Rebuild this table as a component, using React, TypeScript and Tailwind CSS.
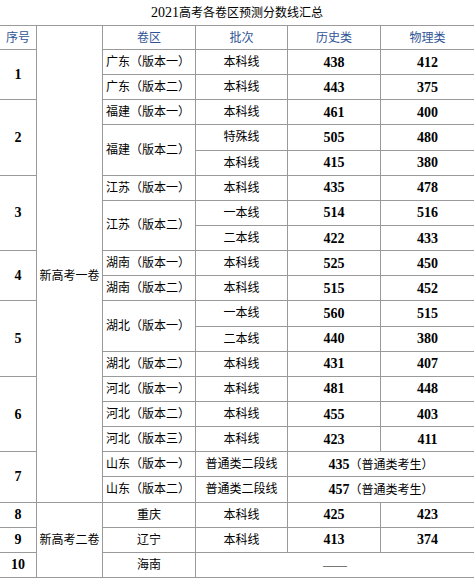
const cjk = "font-['Liberation_Serif','Noto_Sans_CJK_SC',serif]";

const line = "border-b border-r border-[#9a9a9a]";
const cell = `${line} p-0 text-center align-middle text-[12px] text-black`;
const num = "font-['Liberation_Serif',serif] font-bold text-[14px]";
const region = `${line} p-0 pl-[3px] text-left align-middle text-[12px] text-black whitespace-nowrap`;
const head = `${line} border-t p-0 text-center align-middle text-[12px] text-[#2f5496]`;

function Score({ a, b }: { a: string; b: string }) {
  return (
    <>
      <td className={`${cell} ${num}`}>{a}</td>
      <td className={`${cell} ${num} border-r-0`}>{b}</td>
    </>
  );
}

export default function App() {
  return (
    <div className={`h-[579px] w-[474px] overflow-hidden bg-white ${cjk}`}>
      <div className="flex h-[25px] items-center justify-center text-[12px] text-black">
        <span className="font-['Liberation_Serif',serif] text-[14px]">2021</span>
        <span>高考各卷区预测分数线汇总</span>
      </div>
      <table className="w-[474px] table-fixed border-separate border-spacing-0">
        <colgroup>
          <col className="w-[37px]" />
          <col className="w-[66px]" />
          <col className="w-[93px]" />
          <col className="w-[92px]" />
          <col className="w-[93px]" />
          <col className="w-[93px]" />
        </colgroup>
        <tbody>
          <tr className="h-[25px]">
            <td className={head}>序号</td>
            <td className={`${head} border-b-0`}></td>
            <td className={head}>卷区</td>
            <td className={head}>批次</td>
            <td className={head}>历史类</td>
            <td className={`${head} border-r-0`}>物理类</td>
          </tr>

          <tr className="h-[25.15px]">
            <td rowSpan={2} className={`${cell} ${num}`}>1</td>
            <td rowSpan={18} className={cell}>新高考一卷</td>
            <td className={region}>广东（版本一）</td>
            <td className={cell}>本科线</td>
            <Score a="438" b="412" />
          </tr>
          <tr className="h-[25.15px]">
            <td className={region}>广东（版本二）</td>
            <td className={cell}>本科线</td>
            <Score a="443" b="375" />
          </tr>

          <tr className="h-[25.15px]">
            <td rowSpan={3} className={`${cell} ${num}`}>2</td>
            <td className={region}>福建（版本一）</td>
            <td className={cell}>本科线</td>
            <Score a="461" b="400" />
          </tr>
          <tr className="h-[25.15px]">
            <td rowSpan={2} className={region}>福建（版本二）</td>
            <td className={cell}>特殊线</td>
            <Score a="505" b="480" />
          </tr>
          <tr className="h-[25.15px]">
            <td className={cell}>本科线</td>
            <Score a="415" b="380" />
          </tr>

          <tr className="h-[25.15px]">
            <td rowSpan={3} className={`${cell} ${num}`}>3</td>
            <td className={region}>江苏（版本一）</td>
            <td className={cell}>本科线</td>
            <Score a="435" b="478" />
          </tr>
          <tr className="h-[25.15px]">
            <td rowSpan={2} className={region}>江苏（版本二）</td>
            <td className={cell}>一本线</td>
            <Score a="514" b="516" />
          </tr>
          <tr className="h-[25.15px]">
            <td className={cell}>二本线</td>
            <Score a="422" b="433" />
          </tr>

          <tr className="h-[25.15px]">
            <td rowSpan={2} className={`${cell} ${num}`}>4</td>
            <td className={region}>湖南（版本一）</td>
            <td className={cell}>本科线</td>
            <Score a="525" b="450" />
          </tr>
          <tr className="h-[25.15px]">
            <td className={region}>湖南（版本二）</td>
            <td className={cell}>本科线</td>
            <Score a="515" b="452" />
          </tr>

          <tr className="h-[25.15px]">
            <td rowSpan={3} className={`${cell} ${num}`}>5</td>
            <td rowSpan={2} className={region}>湖北（版本一）</td>
            <td className={cell}>一本线</td>
            <Score a="560" b="515" />
          </tr>
          <tr className="h-[25.15px]">
            <td className={cell}>二本线</td>
            <Score a="440" b="380" />
          </tr>
          <tr className="h-[25.15px]">
            <td className={region}>湖北（版本二）</td>
            <td className={cell}>本科线</td>
            <Score a="431" b="407" />
          </tr>

          <tr className="h-[25.15px]">
            <td rowSpan={3} className={`${cell} ${num}`}>6</td>
            <td className={region}>河北（版本一）</td>
            <td className={cell}>本科线</td>
            <Score a="481" b="448" />
          </tr>
          <tr className="h-[25.15px]">
            <td className={region}>河北（版本二）</td>
            <td className={cell}>本科线</td>
            <Score a="455" b="403" />
          </tr>
          <tr className="h-[25.15px]">
            <td className={region}>河北（版本三）</td>
            <td className={cell}>本科线</td>
            <Score a="423" b="411" />
          </tr>

          <tr className="h-[25.15px]">
            <td rowSpan={2} className={`${cell} ${num}`}>7</td>
            <td className={region}>山东（版本一）</td>
            <td className={`${cell} whitespace-nowrap`}>普通类二段线</td>
            <td colSpan={2} className={`${cell} border-r-0`}>
              <span className={num}>435</span>（普通类考生）
            </td>
          </tr>
          <tr className="h-[25.15px]">
            <td className={region}>山东（版本二）</td>
            <td className={`${cell} whitespace-nowrap`}>普通类二段线</td>
            <td colSpan={2} className={`${cell} border-r-0`}>
              <span className={num}>457</span>（普通类考生）
            </td>
          </tr>

          <tr className="h-[25.15px]">
            <td className={`${cell} ${num}`}>8</td>
            <td rowSpan={3} className={cell}>新高考二卷</td>
            <td className={cell}>重庆</td>
            <td className={cell}>本科线</td>
            <Score a="425" b="423" />
          </tr>
          <tr className="h-[25.15px]">
            <td className={`${cell} ${num}`}>9</td>
            <td className={cell}>辽宁</td>
            <td className={cell}>本科线</td>
            <Score a="413" b="374" />
          </tr>
          <tr className="h-[25.15px]">
            <td className={`${cell} ${num}`}>10</td>
            <td className={cell}>海南</td>
            <td colSpan={3} className={`${cell} border-r-0 text-[#444]`}>——</td>
          </tr>
        </tbody>
      </table>
    </div>
  );
}
